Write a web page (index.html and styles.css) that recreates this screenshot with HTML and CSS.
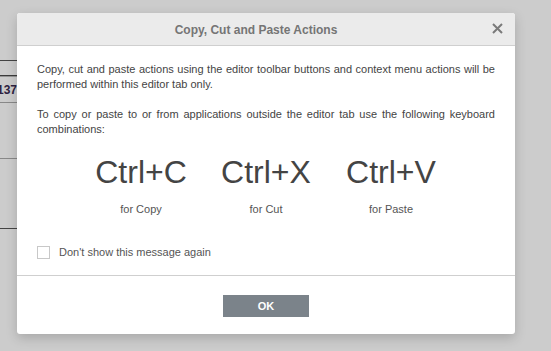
FILE: index.html
```html
<!DOCTYPE html>
<html>
<head>
<meta charset="utf-8">
<link rel="stylesheet" href="styles.css">
</head>
<body>
<div class="page">
  <div class="side">
    <div class="row r1"></div>
    <div class="row r2"></div>
    <div class="row r3"><span class="num">137</span></div>
    <div class="row r4"></div>
    <div class="row r5"></div>
  </div>
</div>
<div class="overlay"></div>
<div class="dialog">
  <div class="head">
    <span class="title">Copy, Cut and Paste Actions</span>
    <span class="close" aria-label="close">
      <svg width="11" height="11" viewBox="0 0 11 11"><path d="M1 1L10 10M10 1L1 10" stroke="#7a7a7a" stroke-width="2" fill="none"/></svg>
    </span>
  </div>
  <div class="body">
    <p>Copy, cut and paste actions using the editor toolbar buttons and context menu actions will be performed within this editor tab only.</p>
    <p>To copy or paste to or from applications outside the editor tab use the following keyboard combinations:</p>
    <div class="keys">
      <div class="key"><div class="combo">Ctrl+C</div><div class="cap">for Copy</div></div>
      <div class="key"><div class="combo">Ctrl+X</div><div class="cap">for Cut</div></div>
      <div class="key"><div class="combo">Ctrl+V</div><div class="cap">for Paste</div></div>
    </div>
    <label class="check"><span class="box"></span><span>Don't show this message again</span></label>
  </div>
  <div class="foot">
    <button class="ok">OK</button>
  </div>
</div>
</body>
</html>
```
FILE: styles.css
```css
html, body {
  margin: 0;
  padding: 0;
  width: 551px;
  height: 351px;
  overflow: hidden;
  font-family: "Liberation Sans", Arial, sans-serif;
  background: #ffffff;
}
.page {
  width: 551px;
  height: 351px;
  background: #ffffff;
}
.side {
  width: 40px;
  padding-top: 60px;
}
.row {
  border-top: 1px solid #4a4a4a;
  box-sizing: border-box;
}
.r1 { height: 15px; border-top-color: #555; }
.r2 { height: 0; }
.r3 {
  height: 26px;
  border-top-color: #bbb;
  font-weight: bold;
  font-size: 12px;
  color: #3a2a50;
  line-height: 26px;
}
.r3 .num { margin-left: -3px; }
.r4 { height: 56px; border-top-color: #aaa; }
.r5 { height: 70px; border-top-color: #aaa; }
.side::after {
  content: "";
  display: block;
  border-top: 1px solid #555;
}
.overlay {
  position: absolute;
  left: 0;
  top: 0;
  width: 551px;
  height: 351px;
  background: rgba(0, 0, 0, 0.2);
}
.dialog {
  position: absolute;
  left: 17px;
  top: 13px;
  width: 498px;
  height: 321px;
  background: #fff;
  border-radius: 3px;
  box-shadow: 0 4px 12px rgba(0, 0, 0, 0.18);
  display: flex;
  flex-direction: column;
  overflow: hidden;
}
.head {
  height: 32px;
  background: #ebebeb;
  border-bottom: 1px solid #cfcfcf;
  display: flex;
  align-items: center;
  justify-content: center;
  position: relative;
}
.title {
  font-weight: bold;
  font-size: 12px;
  color: #757575;
  margin-left: -20px;
  padding-top: 2px;
}
.close {
  position: absolute;
  right: 12px;
  top: 10px;
  width: 11px;
  height: 11px;
  display: flex;
}
.body {
  padding: 16px 20px 0 20px;
  flex: 1;
  border-bottom: 1px solid #cfcfcf;
  color: #444;
  font-size: 11px;
  line-height: 15px;
}
.body p {
  margin: 0 0 15px 0;
  text-align: justify;
}
.keys {
  display: flex;
  justify-content: center;
  margin-top: 2px;
}
.key {
  width: 125px;
  text-align: center;
}
.combo {
  font-size: 32px;
  line-height: 40px;
  color: #444;
}
.cap {
  margin-top: 10px;
  font-size: 11px;
  color: #555;
  line-height: 14px;
}
.check {
  display: flex;
  align-items: center;
  gap: 9px;
  margin-top: 29px;
  color: #555;
}
.box {
  width: 11px;
  height: 11px;
  border: 1px solid #c8c8c8;
  background: #fff;
}
.foot {
  height: 58px;
  display: flex;
  justify-content: center;
  padding-top: 19px;
  box-sizing: border-box;
}
.ok {
  width: 86px;
  height: 22px;
  border: none;
  border-radius: 0;
  background: #7b838a;
  color: #fff;
  font-family: "Liberation Sans", Arial, sans-serif;
  font-weight: bold;
  font-size: 11px;
  padding: 0;
}
```
